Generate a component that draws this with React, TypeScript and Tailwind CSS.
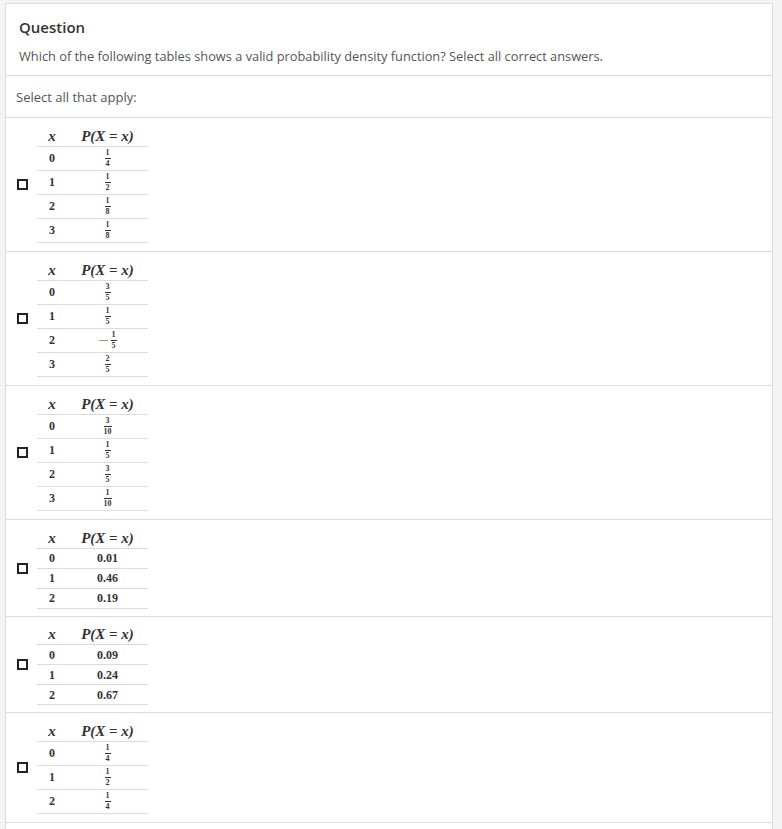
import React from "react";

type Cell = { n: string; d: string; neg?: boolean } | string;

const options: { rows: Cell[]; frac: boolean }[] = [
  { frac: true, rows: [{ n: "1", d: "4" }, { n: "1", d: "2" }, { n: "1", d: "8" }, { n: "1", d: "8" }] },
  { frac: true, rows: [{ n: "3", d: "5" }, { n: "1", d: "5" }, { n: "1", d: "5", neg: true }, { n: "2", d: "5" }] },
  { frac: true, rows: [{ n: "3", d: "10" }, { n: "1", d: "5" }, { n: "3", d: "5" }, { n: "1", d: "10" }] },
  { frac: false, rows: ["0.01", "0.46", "0.19"] },
  { frac: false, rows: ["0.09", "0.24", "0.67"] },
  { frac: true, rows: [{ n: "1", d: "4" }, { n: "1", d: "2" }, { n: "1", d: "4" }] },
];

const Frac = ({ c }: { c: { n: string; d: string; neg?: boolean } }) => (
  <div className="flex items-center justify-center">
    {c.neg && <span className="mr-[3px] block h-px w-[9px] bg-[#999]" />}
    <div className="flex flex-col items-center text-[8px] leading-[8px]">
      <span>{c.n}</span>
      <span className="my-[1px] block h-px w-full min-w-[6px] bg-[#333]" />
      <span>{c.d}</span>
    </div>
  </div>
);

const Option = ({ rows, frac }: { rows: Cell[]; frac: boolean }) => (
  <div
    className={`flex items-center border-b border-[#dcdcdc] pl-[11px] ${frac ? "pb-[8.5px] pt-[8px]" : "pb-[7px] pt-[8px]"}`}
  >
    <div className="h-[11px] w-[11px] border-2 border-[#222]" />
    <table className="ml-[9px] w-[111px] border-collapse font-['Liberation_Serif',serif] font-bold text-[#333]">
      <thead>
        <tr className="h-[20px] border-b border-[#dcdcdc] text-[15px] italic leading-[16px]">
          <th className="w-[30px] p-0 font-bold">x</th>
          <th className="p-0 font-bold">
            P(X <span className="not-italic">=</span> x)
          </th>
        </tr>
      </thead>
      <tbody>
        {rows.map((r, i) => (
          <tr
            key={i}
            className={`border-b border-[#dcdcdc] text-[12px] leading-[14px] ${frac ? "h-[24px]" : "h-[20px]"}`}
          >
            <td className="p-0 text-center">{i}</td>
            <td className="p-0 text-center">{typeof r === "string" ? r : <Frac c={r} />}</td>
          </tr>
        ))}
      </tbody>
    </table>
  </div>
);

export default function App() {
  return (
    <div className="min-h-[829px] bg-[#f4f4f4] pl-[5px] pr-[9px] pt-[3px] font-['Open_Sans',sans-serif]">
      <div className="border-x border-t border-[#dcdcdc] bg-white">
        <div className="border-b border-[#dcdcdc] px-[13px] pb-[10px] pt-[12px]">
          <h2 className="text-[15px] font-semibold leading-[22px] text-[#333]">Question</h2>
          <p className="mt-[9px] text-[12.8px] leading-[18px] text-[#555]">
            Which of the following tables shows a valid probability density function? Select all correct answers.
          </p>
        </div>
        <div className="border-b border-[#dcdcdc] px-[10px] pb-[10px] pt-[12px] text-[13px] leading-[19px] text-[#555]">
          Select all that apply:
        </div>
        {options.map((o, i) => (
          <Option key={i} rows={o.rows} frac={o.frac} />
        ))}
        <div className="h-[7px]" />
      </div>
    </div>
  );
}
